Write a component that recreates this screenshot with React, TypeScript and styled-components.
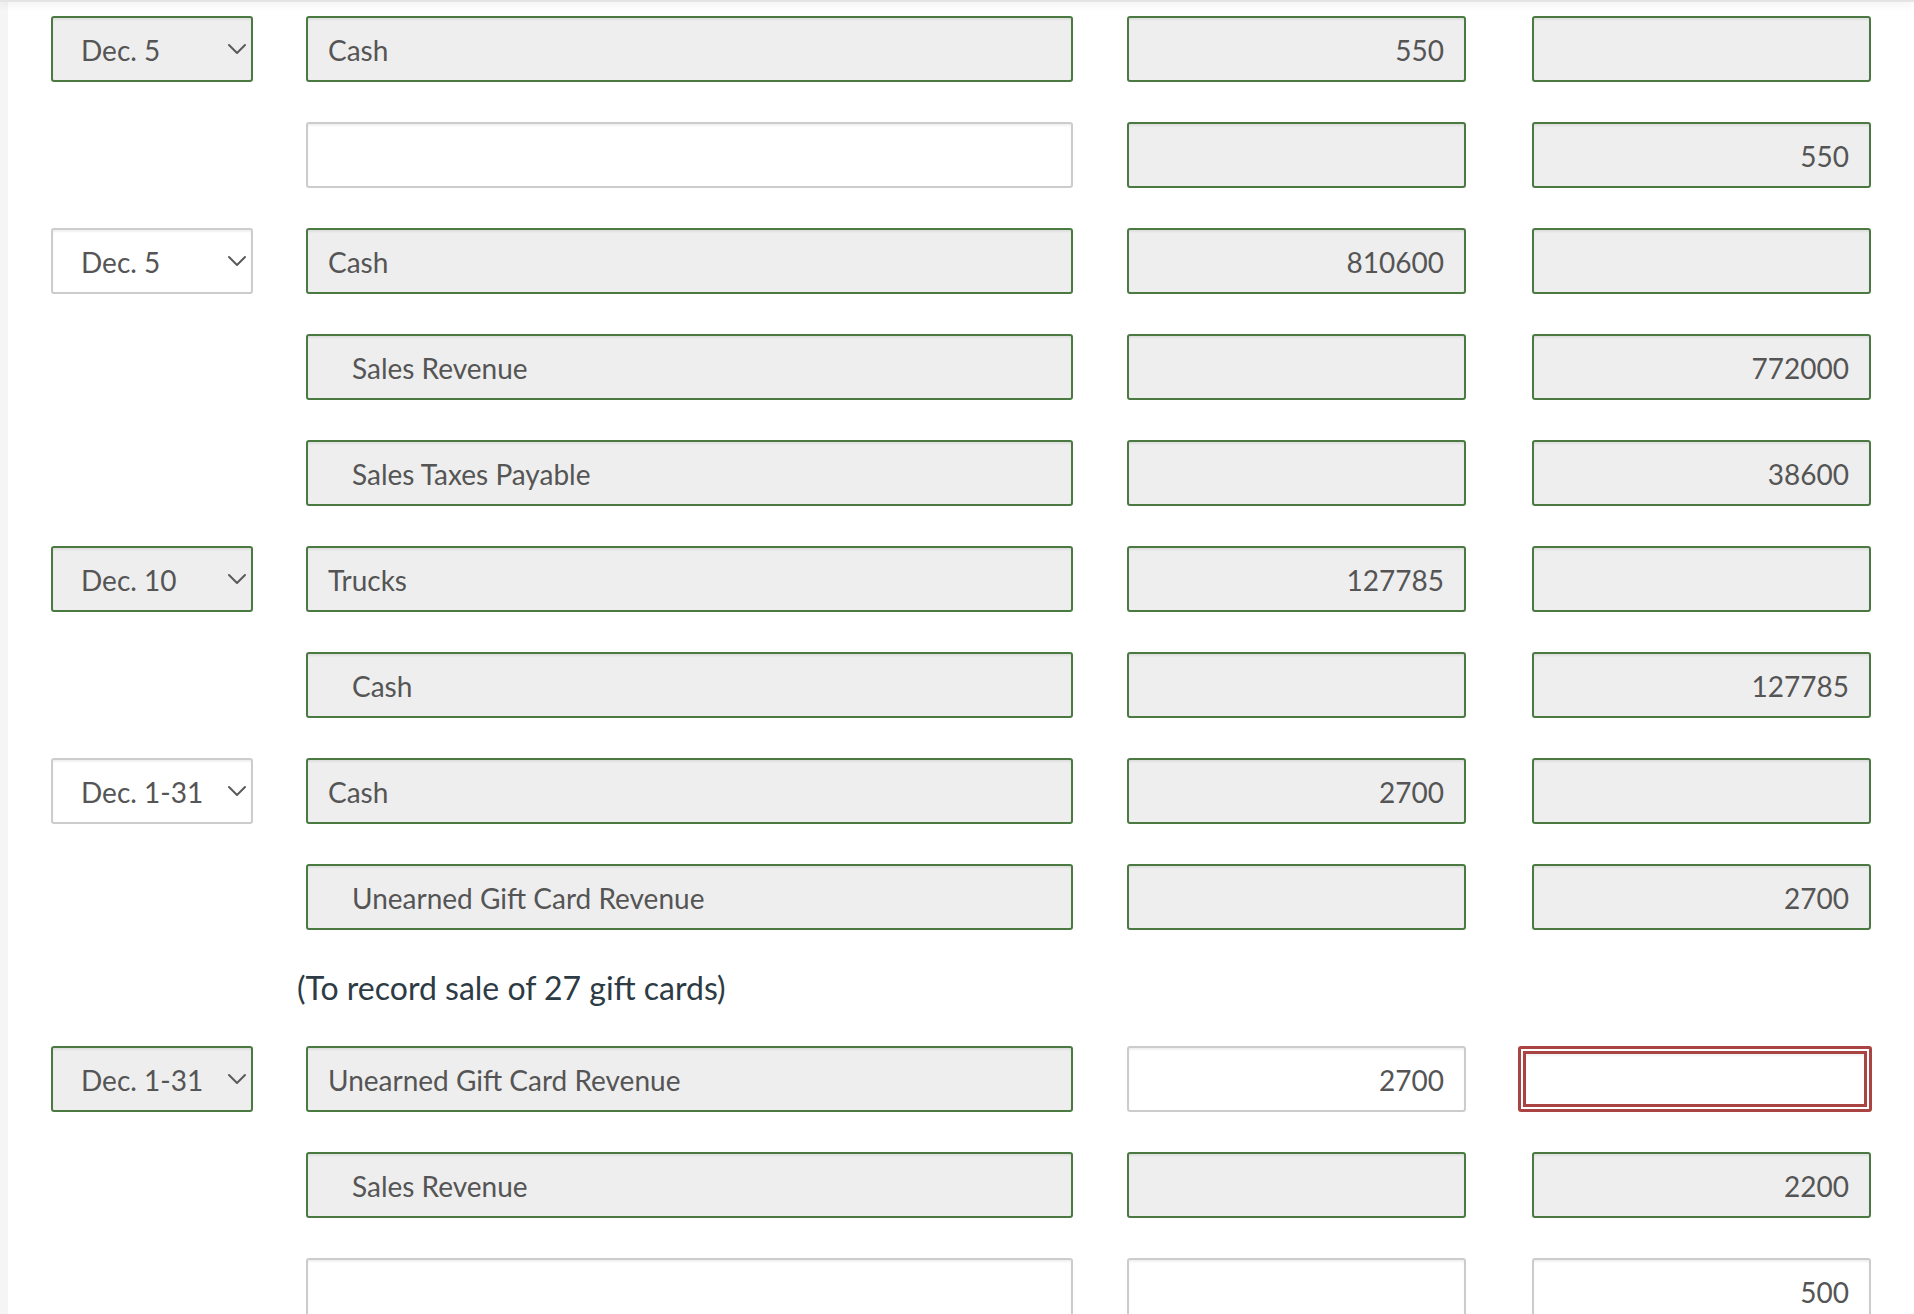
import React from 'react';
import styled, { createGlobalStyle, css } from 'styled-components';

const GlobalStyle = createGlobalStyle`
  html, body {
    margin: 0;
    padding: 0;
    overflow: hidden;
    background: #f5f5f5;
  }
  body {
    font-family: Lato, 'Open Sans', 'Liberation Sans', sans-serif;
  }
`;

type Status = 'correct' | 'neutral' | 'error';

const GREEN = '#4a7a42';
const GREY = '#cccccc';
const RED = '#a94442';

const fieldLook = css<{ $status: Status }>`
  box-sizing: border-box;
  height: 66px;
  border-radius: 3px;
  border: 2px solid ${(p) => (p.$status === 'correct' ? GREEN : GREY)};
  background: ${(p) => (p.$status === 'correct' ? '#eeeeee' : '#ffffff')};
  box-shadow: inset 0 2px 2px rgba(0, 0, 0, 0.06);
  font-family: Lato, 'Open Sans', 'Liberation Sans', sans-serif;
  font-size: 28px;
  color: #555555;
`;

const HEADEREDGE = styled.div`
  position: relative;
  z-index: 1;
  height: 2px;
  background: #e4e4e4;
  box-shadow: 0 2px 7px rgba(0, 0, 0, 0.14);
`;

const PANEL = styled.div`
  margin-left: 8px;
  background: #ffffff;
  padding: 14px 0 0 43px;
  min-height: 1400px;
`;

const ROW = styled.div`
  display: flex;
  align-items: center;
  height: 66px;
  margin-bottom: 40px;
`;

const DATESLOT = styled.div`
  width: 202px;
  margin-right: 53px;
  flex: none;
`;

const DATESELECT = styled.div<{ $status: Status }>`
  ${fieldLook}
  display: flex;
  align-items: center;
  justify-content: space-between;
  padding: 2px 4px 0 28px;
  svg {
    flex: none;
    margin-top: -2px;
  }
`;

const ACCOUNT = styled.input<{ $status: Status; $indent?: boolean }>`
  ${fieldLook}
  width: 767px;
  margin-right: 54px;
  flex: none;
  padding: 2px 20px 0 ${(p) => (p.$indent ? 44 : 20)}px;
  outline: none;
`;

const AMOUNT = styled.input<{ $status: Status }>`
  ${fieldLook}
  width: 339px;
  flex: none;
  text-align: right;
  padding: 2px 20px 0;
  outline: none;
`;

const DEBIT = styled(AMOUNT)`
  margin-right: 66px;
`;

const ERRORFRAME = styled.div`
  box-sizing: border-box;
  width: 354px;
  height: 66px;
  margin-left: -14px;
  border: 3px solid ${RED};
  border-radius: 3px;
  padding: 2px;
  background: #ffffff;
  flex: none;
`;

const ERRORINPUT = styled.input`
  box-sizing: border-box;
  display: block;
  width: 100%;
  height: 100%;
  border: 3px solid ${RED};
  background: #ffffff;
  box-shadow: inset 0 2px 2px rgba(0, 0, 0, 0.06);
  outline: none;
  font-family: Lato, 'Open Sans', 'Liberation Sans', sans-serif;
  font-size: 28px;
  color: #555555;
  text-align: right;
  padding: 0 15px;
`;

const MEMO = styled.div`
  height: 36px;
  margin-bottom: 40px;
  padding-left: 246px;
  font-size: 32px;
  line-height: 36px;
  color: #2d3b45;
`;

interface Cell {
  value: string;
  status: Status;
}

interface EntryRow {
  date?: Cell;
  account: Cell;
  indent?: boolean;
  debit: Cell;
  credit: Cell;
}

const ok = (value = ''): Cell => ({ value, status: 'correct' });
const blank = (value = ''): Cell => ({ value, status: 'neutral' });
const wrong = (value = ''): Cell => ({ value, status: 'error' });

const firstBlock: EntryRow[] = [
  { date: ok('Dec. 5'), account: ok('Cash'), debit: ok('550'), credit: ok() },
  { account: blank(), debit: ok(), credit: ok('550') },
  { date: blank('Dec. 5'), account: ok('Cash'), debit: ok('810600'), credit: ok() },
  { account: ok('Sales Revenue'), indent: true, debit: ok(), credit: ok('772000') },
  { account: ok('Sales Taxes Payable'), indent: true, debit: ok(), credit: ok('38600') },
  { date: ok('Dec. 10'), account: ok('Trucks'), debit: ok('127785'), credit: ok() },
  { account: ok('Cash'), indent: true, debit: ok(), credit: ok('127785') },
  { date: blank('Dec. 1-31'), account: ok('Cash'), debit: ok('2700'), credit: ok() },
  { account: ok('Unearned Gift Card Revenue'), indent: true, debit: ok(), credit: ok('2700') },
];

const secondBlock: EntryRow[] = [
  { date: ok('Dec. 1-31'), account: ok('Unearned Gift Card Revenue'), debit: blank('2700'), credit: wrong() },
  { account: ok('Sales Revenue'), indent: true, debit: ok(), credit: ok('2200') },
  { account: blank(), debit: blank(), credit: blank('500') },
];

function Chevron() {
  return (
    <svg width="20" height="12" viewBox="0 0 20 12" fill="none">
      <path d="M2 2 L10 10 L18 2" stroke="#5a5a5a" strokeWidth="2" strokeLinecap="round" strokeLinejoin="round" />
    </svg>
  );
}

function JournalRow({ row }: { row: EntryRow }) {
  return (
    <ROW>
      <DATESLOT>
        {row.date && (
          <DATESELECT $status={row.date.status}>
            <span>{row.date.value}</span>
            <Chevron />
          </DATESELECT>
        )}
      </DATESLOT>
      <ACCOUNT readOnly $status={row.account.status} $indent={row.indent} value={row.account.value} />
      <DEBIT readOnly $status={row.debit.status} value={row.debit.value} />
      {row.credit.status === 'error' ? (
        <ERRORFRAME>
          <ERRORINPUT readOnly value={row.credit.value} />
        </ERRORFRAME>
      ) : (
        <AMOUNT readOnly $status={row.credit.status} value={row.credit.value} />
      )}
    </ROW>
  );
}

export default function App() {
  return (
    <>
      <GlobalStyle />
      <HEADEREDGE />
      <PANEL>
        {firstBlock.map((row, i) => (
          <JournalRow key={'a' + i} row={row} />
        ))}
        <MEMO>(To record sale of 27 gift cards)</MEMO>
        {secondBlock.map((row, i) => (
          <JournalRow key={'b' + i} row={row} />
        ))}
      </PANEL>
    </>
  );
}
